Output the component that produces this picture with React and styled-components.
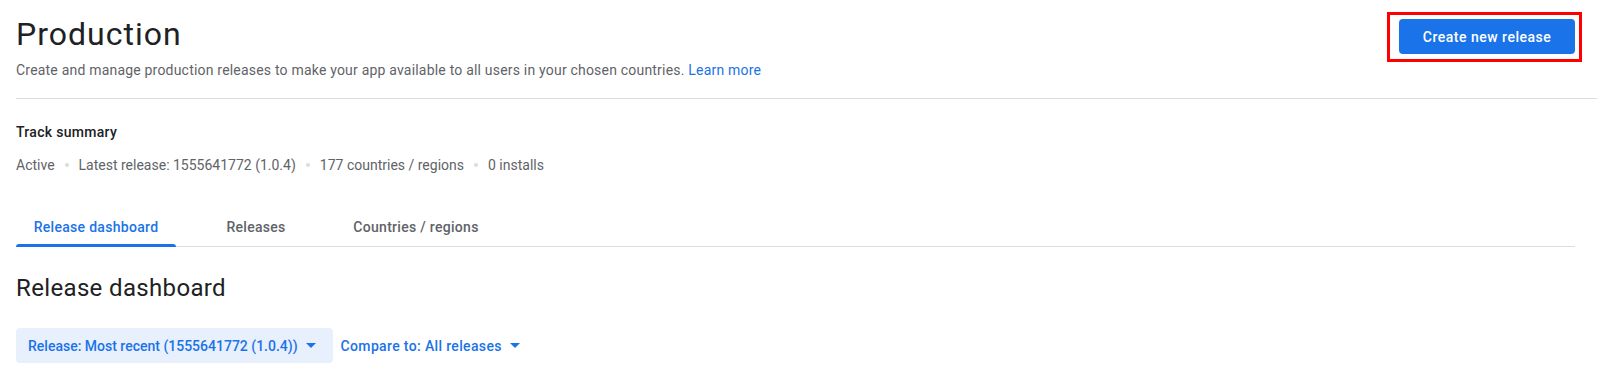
import React from "react";
import styled, { createGlobalStyle } from "styled-components";

const GlobalStyle = createGlobalStyle`
  body {
    margin: 0;
    background: #fff;
    font-family: Roboto, "Liberation Sans", Arial, sans-serif;
    color: #202124;
  }
`;

const stats = [
  "Active",
  "Latest release: 1555641772 (1.0.4)",
  "177 countries / regions",
  "0 installs",
];

const tabs = ["Release dashboard", "Releases", "Countries / regions"];

function Caret() {
  return (
    <svg width="10" height="5" viewBox="0 0 10 5" aria-hidden="true">
      <path d="M0 0h10L5 5z" fill="currentColor" />
    </svg>
  );
}

export default function App() {
  const [activeTab, setActiveTab] = React.useState(tabs[0]);

  return (
    <>
      <GlobalStyle />
      <Header>
        <div>
          <Title>Production</Title>
          <Subtitle>
            Create and manage production releases to make your app available
            to all users in your chosen countries. <Link href="#">Learn more</Link>
          </Subtitle>
        </div>
        <Highlight>
          <PrimaryButton type="button">Create new release</PrimaryButton>
        </Highlight>
      </Header>

      <Content>
        <SectionLabel>Track summary</SectionLabel>
        <StatsRow>
          {stats.map((item, i) => (
            <React.Fragment key={item}>
              {i > 0 && <Dot />}
              <span>{item}</span>
            </React.Fragment>
          ))}
        </StatsRow>

        <TabBar>
          {tabs.map((tab) => (
            <Tab
              key={tab}
              type="button"
              $active={tab === activeTab}
              onClick={() => setActiveTab(tab)}
            >
              {tab}
            </Tab>
          ))}
        </TabBar>

        <Heading>Release dashboard</Heading>

        <Filters>
          <FilterButton type="button" $filled>
            Release: Most recent (1555641772 (1.0.4))
            <Caret />
          </FilterButton>
          <FilterButton type="button">
            Compare to: All releases
            <Caret />
          </FilterButton>
        </Filters>
      </Content>
    </>
  );
}

const Header = styled.header`
  display: flex;
  justify-content: space-between;
  align-items: flex-start;
  margin-left: 16px;
  padding: 14px 22px 18px 0;
  border-bottom: 1px solid #dadce0;
`;

const Title = styled.h1`
  margin: 0;
  font-size: 32px;
  line-height: 40px;
  font-weight: 400;
  letter-spacing: 1px;
  color: #202124;
`;

const Subtitle = styled.p`
  margin: 6px 0 0;
  font-size: 14px;
  line-height: 20px;
  letter-spacing: 0.2px;
  color: #5f6368;
`;

const Link = styled.a`
  color: #1a73e8;
  text-decoration: none;
`;

const Highlight = styled.div`
  position: relative;
  margin-top: 5px;

  &::before {
    content: "";
    position: absolute;
    left: -12px;
    right: -7px;
    top: -7px;
    bottom: -8px;
    border: 3px solid #ff0000;
    pointer-events: none;
  }
`;

const PrimaryButton = styled.button`
  display: block;
  width: 176px;
  height: 35px;
  border: none;
  border-radius: 4px;
  background: #1a73e8;
  color: #fff;
  font-family: inherit;
  font-size: 14px;
  font-weight: 500;
  letter-spacing: 0.5px;
  cursor: pointer;
`;

const Content = styled.main`
  padding: 23px 22px 0 16px;
`;

const SectionLabel = styled.h2`
  margin: 0;
  font-size: 14px;
  line-height: 20px;
  font-weight: 500;
  letter-spacing: 0.3px;
  color: #202124;
`;

const StatsRow = styled.div`
  display: flex;
  align-items: center;
  gap: 10px;
  margin-top: 13px;
  font-size: 14px;
  line-height: 20px;
  color: #5f6368;
`;

const Dot = styled.span`
  width: 4px;
  height: 4px;
  border-radius: 50%;
  background: #dadce0;
`;

const TabBar = styled.nav`
  display: flex;
  margin-top: 32px;
  border-bottom: 1px solid #dadce0;
`;

const Tab = styled.button`
  position: relative;
  min-width: 160px;
  height: 39px;
  padding: 0 17px;
  border: none;
  background: none;
  font-family: inherit;
  font-size: 14px;
  font-weight: 500;
  letter-spacing: 0.3px;
  color: ${(p) => (p.$active ? "#1a73e8" : "#5f6368")};
  cursor: pointer;

  &::after {
    content: "";
    display: ${(p) => (p.$active ? "block" : "none")};
    position: absolute;
    left: 0;
    right: 0;
    bottom: -1px;
    height: 3px;
    border-radius: 3px 3px 0 0;
    background: #1a73e8;
  }
`;

const Heading = styled.h2`
  margin: 25px 0 0;
  font-size: 24px;
  line-height: 32px;
  font-weight: 400;
  letter-spacing: 0.35px;
  color: #202124;
`;

const Filters = styled.div`
  display: flex;
  align-items: center;
  gap: 8px;
  margin-top: 24px;
`;

const FilterButton = styled.button`
  display: flex;
  align-items: center;
  gap: 8px;
  height: 35px;
  padding: ${(p) => (p.$filled ? "0 17px 0 12px" : "0")};
  border: none;
  border-radius: 4px;
  background: ${(p) => (p.$filled ? "#e8f0fe" : "transparent")};
  color: #1a73e8;
  font-family: inherit;
  font-size: 14px;
  font-weight: 500;
  letter-spacing: ${(p) => (p.$filled ? "0" : "0.35px")};
  cursor: pointer;
`;
